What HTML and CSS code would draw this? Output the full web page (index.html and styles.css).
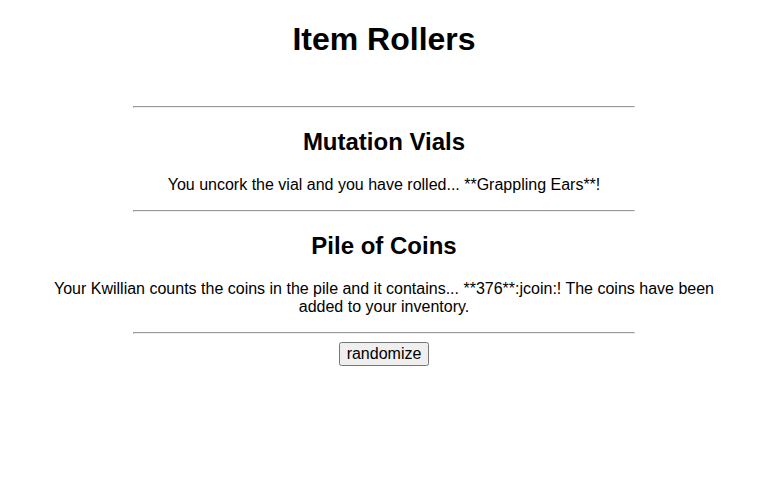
FILE: index.html
```html
<!DOCTYPE html>
<html lang="en">
<head>
    <meta charset="UTF-8">
    <meta name="viewport" content="width=device-width, initial-scale=1.0">
    <title>Item Rollers</title>
    <link rel="stylesheet" href="styles.css">
</head>
<body>
    <h1>Item Rollers</h1>
    <div class="spacer"><br></div>
    <div class="container">
        <hr>
        <section class="roller">
            <h2>Mutation Vials</h2>
            <p>You uncork the vial and you have rolled... **Grappling Ears**!</p>
        </section>
        <hr>
        <section class="roller">
            <h2>Pile of Coins</h2>
            <p>Your Kwillian counts the coins in the pile and it contains... **376**:jcoin:! The coins have been added to your inventory.</p>
        </section>
        <hr>
        <button type="button" class="randomize">randomize</button>
    </div>
</body>
</html>
```

FILE: styles.css
```css
/* Base layout: everything centered in a single column */
body {
    font-family: "Liberation Sans", Arial, sans-serif;
    text-align: center;
    color: #000;
    margin: 0 8px;
}
.container {
    padding: 0 38px;
}
hr {
    width: 500px;
}
.randomize {
    font-family: "Liberation Sans", Arial, sans-serif;
    font-size: 16px;
}
```
